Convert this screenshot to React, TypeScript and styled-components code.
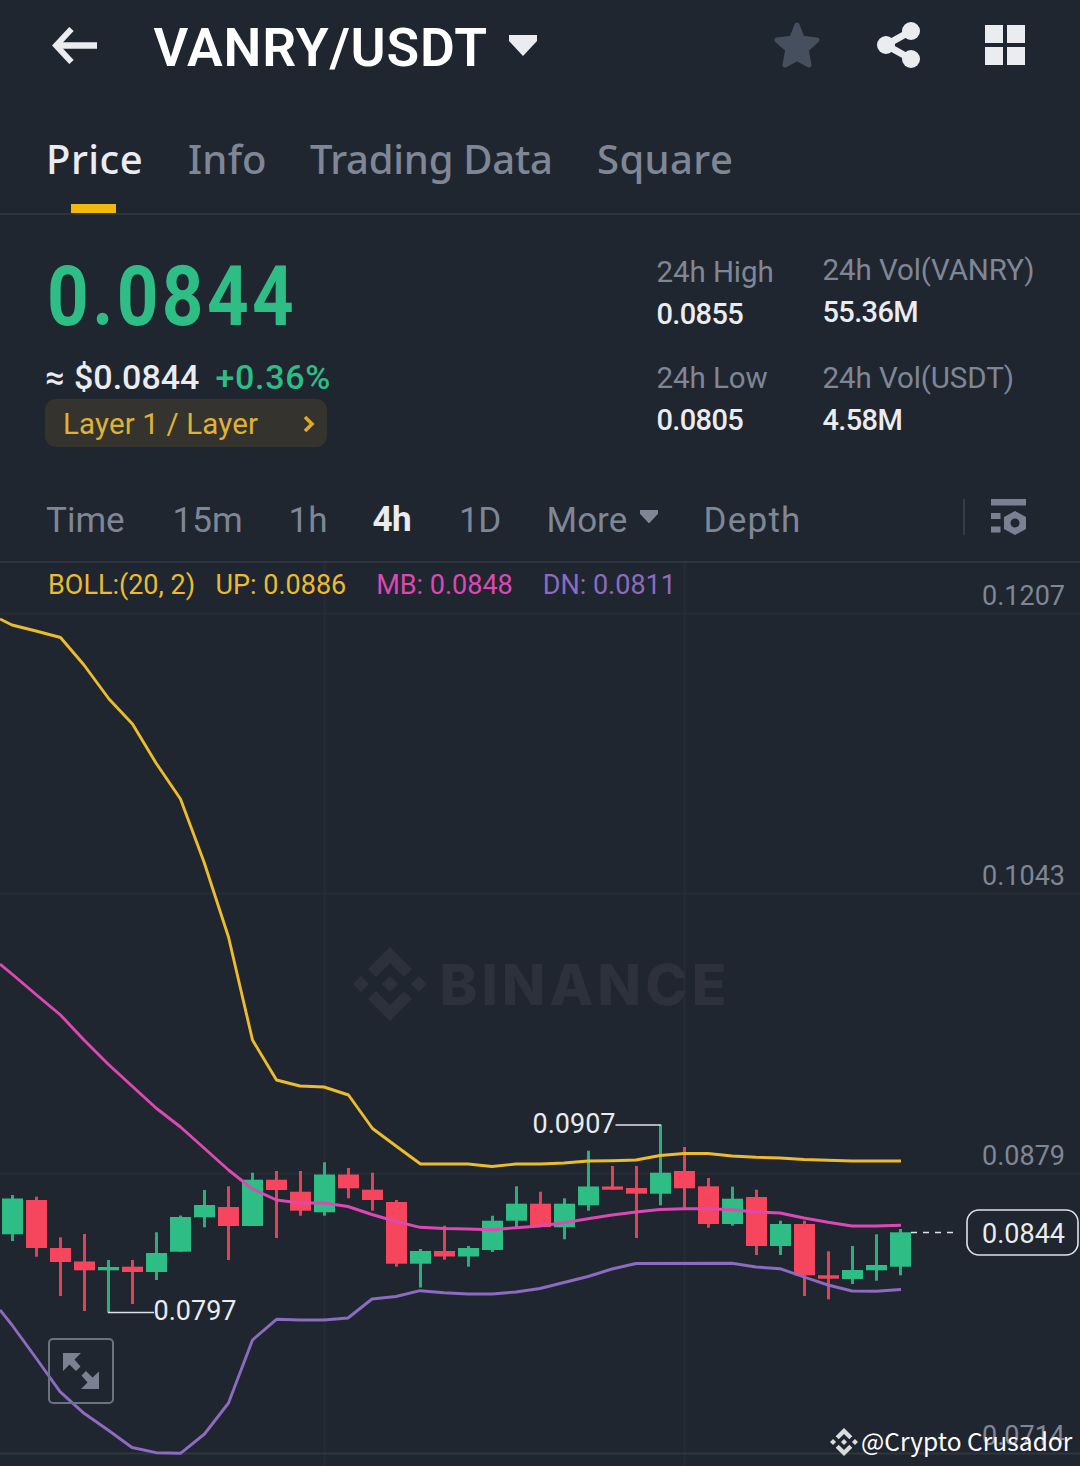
import React from 'react';
import styled, { createGlobalStyle } from 'styled-components';

const color = {
  bg: '#1f262f',
  line: '#2d343f',
  grid: '#262c36',
  text: '#eaecef',
  muted: '#7f8796',
  green: '#2ebd85',
  red: '#f6465d',
  yellow: '#ecbc2e',
  pink: '#de48b4',
  purple: '#8c6bc0',
  mark: '#2c313c',
};

const GlobalStyle = createGlobalStyle`
  body {
    margin: 0;
    background: ${color.bg};
    font-family: Roboto, 'Liberation Sans', sans-serif;
    color: ${color.text};
  }
`;

const Screen = styled.div`
  width: 1080px;
  height: 1466px;
  overflow: hidden;
  display: flex;
  flex-direction: column;
  background: ${color.bg};
`;

const Icon = styled.svg`
  display: block;
  flex: none;
`;

const Header = styled.header`
  display: flex;
  align-items: center;
  height: 90px;
  padding: 0 55px 0 52px;
  box-sizing: border-box;
`;

const Pair = styled.h1`
  margin: 0 21px 0 56.5px;
  padding-top: 5px;
  font-size: 53.5px;
  font-weight: 600;
  line-height: 60px;
  letter-spacing: 0.8px;
  color: #fff;
`;

const Actions = styled.div`
  display: flex;
  align-items: center;
  margin-left: auto;
  gap: 57px;
`;

const GridAction = styled.div`
  margin-left: 8px;
`;

const Tabs = styled.nav`
  display: flex;
  gap: 44px;
  height: 125px;
  padding-left: 46px;
  box-sizing: border-box;
  border-bottom: 2px solid ${color.line};
`;

const Tab = styled.div<{ $width: number; $spacing: number; $active?: boolean }>`
  position: relative;
  width: ${(p) => p.$width}px;
  padding-top: 44px;
  white-space: nowrap;
  font-family: 'Noto Sans', sans-serif;
  font-size: 40px;
  font-weight: 500;
  line-height: 50px;
  letter-spacing: ${(p) => p.$spacing}px;
  color: ${(p) => (p.$active ? color.text : color.muted)};
`;

const TabMarker = styled.span`
  position: absolute;
  left: 25px;
  bottom: 0;
  width: 45px;
  height: 9px;
  background: #f0b90b;
`;

const Summary = styled.section`
  display: flex;
  height: 262px;
  padding-left: 45px;
`;

const PriceColumn = styled.div`
  width: 611.5px;
  padding-top: 40px;
`;

const LastPrice = styled.div`
  width: 300px;
  margin-left: 2px;
  font-size: 84px;
  font-weight: 700;
  line-height: 84px;
  letter-spacing: 4px;
  transform: scaleX(0.865);
  transform-origin: left;
  color: ${color.green};
`;

const FiatRow = styled.div`
  display: flex;
  margin-top: 18px;
  font-size: 34px;
  font-weight: 500;
  line-height: 40px;
`;

const Approx = styled.span`
  width: 29px;
`;

const Change = styled.span`
  margin-left: 16px;
  letter-spacing: 0.7px;
  color: ${color.green};
`;

const Chip = styled.div`
  display: flex;
  align-items: center;
  justify-content: space-between;
  width: 282px;
  height: 48px;
  margin-top: 2px;
  padding: 2px 12px 0 18px;
  box-sizing: border-box;
  border-radius: 11px;
  background: #35332d;
  font-size: 29.5px;
  line-height: 40px;
  letter-spacing: 0.15px;
  color: #dfb237;
`;

const StatColumn = styled.div<{ $top: number; $width: number; $gap: number }>`
  display: flex;
  flex-direction: column;
  gap: ${(p) => p.$gap}px;
  width: ${(p) => p.$width}px;
  padding-top: ${(p) => p.$top}px;
  white-space: nowrap;
`;

const StatLabel = styled.div`
  font-size: 29.5px;
  line-height: 42px;
  letter-spacing: -0.08px;
  color: ${color.muted};
`;

const StatValue = styled.div`
  font-size: 29px;
  font-weight: 500;
  line-height: 42px;
  letter-spacing: -0.65px;
`;

const Intervals = styled.nav`
  display: flex;
  align-items: center;
  gap: 46px;
  height: 86px;
  padding: 3px 54px 0 46px;
  box-sizing: border-box;
  border-bottom: 2px solid ${color.line};
  font-size: 35px;
  line-height: 40px;
  color: ${color.muted};
`;

const Interval = styled.div<{ $width: number; $active?: boolean; $spacing?: number }>`
  display: flex;
  align-items: center;
  gap: 13px;
  width: ${(p) => p.$width}px;
  padding-bottom: ${(p) => (p.$active ? 2 : 0)}px;
  white-space: nowrap;
  font-weight: ${(p) => (p.$active ? 700 : 400)};
  letter-spacing: ${(p) => p.$spacing ?? 0}px;
  color: ${(p) => (p.$active ? color.text : color.muted)};
`;

const MenuMark = styled.span`
  padding-bottom: 8px;
`;

const ChartTools = styled.div`
  display: flex;
  align-items: center;
  gap: 26px;
  margin-left: auto;
  padding-bottom: 7px;
`;

const ToolDivider = styled.span`
  width: 2px;
  height: 36px;
  background: #343b47;
`;

const ChartArea = styled.main`
  position: relative;
  height: 903px;
`;

const Legend = styled.div`
  position: absolute;
  top: 4px;
  left: 48px;
  display: flex;
  gap: 30px;
  white-space: nowrap;
  font-size: 27px;
  line-height: 36px;
  letter-spacing: -0.01px;
`;

const LegendItem = styled.span<{ $color: string }>`
  color: ${(p) => p.$color};
`;

const LegendName = styled.span`
  margin-right: 20.5px;
`;

const ExpandButton = styled.div`
  position: absolute;
  left: 48px;
  top: 775px;
  display: grid;
  place-items: center;
  width: 66px;
  height: 66px;
  box-sizing: border-box;
  border: 2px solid #6b7280;
  border-radius: 5px;
`;

const Credit = styled.div`
  position: absolute;
  left: 830px;
  top: 859px;
  display: flex;
  align-items: center;
  gap: 3px;
  height: 40px;
  white-space: nowrap;
  font-family: 'Noto Sans CJK SC', sans-serif;
  font-size: 24.5px;
  line-height: 38px;
  letter-spacing: 0.05px;
  color: #fff;
`;

const CreditName = styled.span`
  padding-bottom: 2px;
`;

const ChartSvg = styled.svg`
  display: block;
  font-family: Roboto, 'Liberation Sans', sans-serif;
  font-size: 27px;
`;

type Candle = [up: 0 | 1, bodyTop: number, bodyBottom: number, high: number, low: number];

const candles: Candle[] = [
  [1, 1198.5, 1234.3, 1195, 1241],
  [0, 1200, 1248, 1196.7, 1256.7],
  [0, 1248, 1262, 1237.3, 1296],
  [0, 1261.5, 1270.3, 1234, 1311],
  [1, 1267, 1270.3, 1260, 1312.7],
  [0, 1266.7, 1272, 1260, 1304],
  [1, 1253, 1272, 1232.3, 1280],
  [1, 1217, 1251.7, 1215.5, 1251.7],
  [1, 1205, 1217.3, 1190, 1227.3],
  [0, 1207, 1226, 1186.3, 1260],
  [1, 1179.7, 1226, 1172.7, 1226],
  [0, 1179.7, 1190, 1171, 1238],
  [0, 1191.7, 1210.7, 1171, 1215.7],
  [1, 1174.5, 1212.3, 1162.3, 1215.7],
  [0, 1174.5, 1188.3, 1168, 1198.3],
  [0, 1189.7, 1200, 1172.7, 1210.7],
  [0, 1202, 1263.7, 1200, 1266.7],
  [1, 1251, 1263.7, 1249, 1287.5],
  [0, 1251, 1256.5, 1225.7, 1259.7],
  [1, 1248, 1256.5, 1246, 1266.7],
  [1, 1220.7, 1250, 1215.7, 1252],
  [1, 1203.7, 1220.7, 1186.3, 1227.3],
  [0, 1203.7, 1227, 1191.7, 1227],
  [1, 1203.7, 1227.3, 1198.3, 1239.3],
  [1, 1186.5, 1205.3, 1150.7, 1210.7],
  [0, 1186.5, 1189.7, 1166, 1189.7],
  [0, 1188, 1193.7, 1166, 1238],
  [1, 1172.7, 1193.7, 1124.7, 1205.3],
  [0, 1171, 1188.3, 1147, 1208],
  [0, 1186.3, 1224, 1178, 1227.7],
  [1, 1198.7, 1224, 1186.7, 1225.7],
  [0, 1197, 1246, 1189.7, 1255],
  [1, 1224, 1246, 1220.7, 1255],
  [0, 1224, 1275.3, 1220.7, 1296],
  [0, 1275.3, 1278.7, 1251.3, 1299.3],
  [1, 1270, 1279, 1246, 1284],
  [1, 1265, 1270.3, 1234.3, 1280.7],
  [1, 1232.3, 1266.7, 1229, 1275.3],
];

const upperBand =
  '0,619 12,625 36,631 60.5,637.5 84,665 109,699 132.5,724 156,763 180.5,799 204,862 228.5,937 252.5,1040 276.5,1080 300,1086 324,1087 348.5,1095 372.5,1128.5 396,1146 420.5,1164 468,1164 492,1166.5 516,1164 540,1164 564,1163 588,1161 612,1160.7 636,1160 660,1155.5 684,1153.5 708,1153.5 732,1156 756,1157.3 780,1158 804,1159.5 828,1160.3 852,1161 901,1161';
const middleBand =
  '0,964 12,974 36,994.5 60.5,1015 84,1040 108,1064 132,1086 156,1108 180.5,1127 204,1148 228.5,1170 252.5,1189 276.5,1200 300,1203 324,1203 348,1206.5 372,1214.5 396,1221.5 420,1227.3 444,1228.5 468,1229 492,1229.8 516,1227.7 540,1226 564,1222.7 588,1218.7 612,1215 636,1212 660,1209.5 684,1208.7 708,1208.7 732,1209.7 756,1212 780,1213 804,1218 828,1222.3 852,1226 876,1226 901,1225.3';
const lowerBand =
  '0,1310 12,1325 36,1358 60,1391.7 84,1413.3 108,1430 132,1447.5 156,1452.7 180.5,1453.3 204.5,1434 228.5,1403 252.5,1340 276.5,1319.3 300,1320 324,1320 348,1318 372,1299 396,1296.5 420,1290.7 444,1292.7 468,1294 492,1294 516,1292 540,1288.5 564,1282.5 588,1276.5 612,1269 636,1263.5 732,1263.3 756,1267 780,1268.7 804,1277 828,1285 852,1291 876,1291.3 901,1289.5';

const axisLabels: [string, number][] = [
  ['0.1207', 604.7],
  ['0.1043', 884.7],
  ['0.0879', 1164.7],
  ['0.0714', 1444.7],
];

/* The exchange emblem on a 74-unit square. */
const emblem =
  'M37 0 59 22 51 30 37 16 23 30 15 22ZM8 29 16 37 8 45 0 37ZM66 29 74 37 66 45 58 37ZM37 29 45 37 37 45 29 37ZM37 74 15 52 23 44 37 58 51 44 59 52Z';

const DownMark = ({ width, height, fill }: { width: number; height: number; fill: string }) => (
  <Icon width={width} height={height} viewBox="0 0 28 21" fill={fill}>
    <path d="M0 0H28V6L14 21 0 6Z" />
  </Icon>
);

const Chart = () => (
  <ChartSvg width={1080} height={903} viewBox="0 563 1080 903">
    <g fill={color.grid}>
      <rect x={323.5} y={563} width={2} height={903} />
      <rect x={683.5} y={563} width={2} height={903} />
      <rect x={0} y={612.5} width={1080} height={2} />
      <rect x={0} y={892.5} width={1080} height={2} />
      <rect x={0} y={1172.5} width={1080} height={2} />
      <rect x={0} y={1452.5} width={1080} height={2} fill="#30363f" />
    </g>
    <g fill={color.mark}>
      <path d={emblem} transform="translate(353 947)" />
      <text x={439.5} y={1004.5} fontFamily="Inter, sans-serif" fontSize={57} fontWeight={800} textLength={287}>
        BINANCE
      </text>
    </g>
    {candles.map(([up, top, bottom, high, low], i) => (
      <g key={i} fill={up ? color.green : color.red}>
        <rect x={2 + i * 24} y={top} width={21} height={bottom - top} />
        <rect x={11 + i * 24} y={high} width={3} height={low - high} opacity={0.9} />
      </g>
    ))}
    <g fill="none" strokeWidth={2.9} strokeLinejoin="round">
      <polyline points={upperBand} stroke={color.yellow} />
      <polyline points={middleBand} stroke={color.pink} />
      <polyline points={lowerBand} stroke={color.purple} />
    </g>
    <g stroke="#dfe2e8" strokeWidth={1.6} fill="none">
      <path d="M108 1312.5H154M615.5 1125H661" />
      <path d="M911 1232.5H953" strokeDasharray="6 6" />
      <rect x={967} y={1210} width={111} height={45} rx={12} />
    </g>
    <g fill={color.text}>
      <text x={153.5} y={1319.7}>0.0797</text>
      <text x={532.5} y={1132.7}>0.0907</text>
      <text x={982} y={1242.8}>0.0844</text>
    </g>
    <g fill={color.muted}>
      {axisLabels.map(([label, y]) => (
        <text key={label} x={982} y={y}>
          {label}
        </text>
      ))}
    </g>
  </ChartSvg>
);

export default function App() {
  return (
    <Screen>
      <GlobalStyle />
      <Header>
        <Icon width={45} height={37} viewBox="0 0 45 37" fill="none" stroke={color.text}>
          <path d="M4 18.5H45" strokeWidth={6.4} />
          <path d="M19.5 2 4 18.5 19.5 35" strokeWidth={6} />
        </Icon>
        <Pair>VANRY/USDT</Pair>
        <DownMark width={28} height={21} fill={color.text} />
        <Actions>
          <Icon width={46} height={46} viewBox="0 0 46 46" fill="#464f5e" stroke="#464f5e" strokeWidth={5} strokeLinejoin="round">
            <path d="M23 3 28.2 16.2 43 18 32.2 27.5 35 43 23 36.5 11 43 13.8 27.5 3 18 17.8 16.2Z" />
          </Icon>
          <Icon width={43} height={46} viewBox="0 0 43 46" fill={color.text} stroke={color.text}>
            <path d="M34 9 9 23 34 37" fill="none" strokeWidth={7} />
            <circle cx={34} cy={9} r={9} stroke="none" />
            <circle cx={9} cy={23} r={9} stroke="none" />
            <circle cx={34} cy={37} r={9} stroke="none" />
          </Icon>
          <GridAction>
            <Icon width={40} height={40} viewBox="0 0 40 40" fill={color.text}>
              <path d="M0 0H18V18H0ZM22 0H40V18H22ZM0 22H18V40H0ZM22 22H40V40H22Z" />
            </Icon>
          </GridAction>
        </Actions>
      </Header>

      <Tabs>
        <Tab $width={98} $spacing={0.5} $active>
          Price
          <TabMarker />
        </Tab>
        <Tab $width={78} $spacing={0.2}>Info</Tab>
        <Tab $width={243} $spacing={-0.25}>Trading Data</Tab>
        <Tab $width={136} $spacing={0.4}>Square</Tab>
      </Tabs>

      <Summary>
        <PriceColumn>
          <LastPrice>0.0844</LastPrice>
          <FiatRow>
            <Approx>≈</Approx>
            <span>$0.0844</span>
            <Change>+0.36%</Change>
          </FiatRow>
          <Chip>
            Layer 1 / Layer
            <Icon width={12} height={18} viewBox="0 0 12 18" fill="none" stroke="#dda92b" strokeWidth={3.6}>
              <path d="M2 2 9 9 2 16" />
            </Icon>
          </Chip>
        </PriceColumn>
        <StatColumn $top={36} $width={166} $gap={22}>
          <div>
            <StatLabel>24h High</StatLabel>
            <StatValue>0.0855</StatValue>
          </div>
          <div>
            <StatLabel>24h Low</StatLabel>
            <StatValue>0.0805</StatValue>
          </div>
        </StatColumn>
        <StatColumn $top={34} $width={214} $gap={24}>
          <div>
            <StatLabel>24h Vol(VANRY)</StatLabel>
            <StatValue>55.36M</StatValue>
          </div>
          <div>
            <StatLabel>24h Vol(USDT)</StatLabel>
            <StatValue>4.58M</StatValue>
          </div>
        </StatColumn>
      </Summary>

      <Intervals>
        <Interval $width={80.6}>Time</Interval>
        <Interval $width={70}>15m</Interval>
        <Interval $width={38}>1h</Interval>
        <Interval $width={40.5} $active $spacing={-0.6}>4h</Interval>
        <Interval $width={41.5} $spacing={-0.4}>1D</Interval>
        <Interval $width={111}>
          More
          <MenuMark>
            <DownMark width={18} height={13.5} fill={color.muted} />
          </MenuMark>
        </Interval>
        <Interval $width={98} $spacing={1.2}>Depth</Interval>
        <ChartTools>
          <ToolDivider />
          <Icon width={35} height={36} viewBox="0 0 35 36" fill="#7a8192">
            <path d="M0 0H35V6.5H0ZM0 14H9.5V20H0ZM0 27.5H9.5V33.5H0Z" />
            <path fillRule="evenodd" d="M24 12 35 18V30L24 36 13 30V18ZM24 19.5A4.5 4.5 0 1 0 24 28.5 4.5 4.5 0 1 0 24 19.5Z" />
          </Icon>
        </ChartTools>
      </Intervals>

      <ChartArea>
        <Chart />
        <Legend>
          <LegendItem $color={color.yellow}>
            <LegendName>BOLL:(20, 2)</LegendName>
            UP: 0.0886
          </LegendItem>
          <LegendItem $color={color.pink}>MB: 0.0848</LegendItem>
          <LegendItem $color={color.purple}>DN: 0.0811</LegendItem>
        </Legend>
        <ExpandButton>
          <Icon width={36} height={36} viewBox="0 0 36 36" fill="#7a8192">
            <path d="M0 0H18L11.5 6.5 17.5 13.5 13 18 6.5 11.5 0 18ZM36 36H18L24.5 29.5 18.5 22.5 23 18 29.5 24.5 36 18.5Z" />
          </Icon>
        </ExpandButton>
        <Credit>
          <Icon width={28} height={28} viewBox="0 0 74 74" fill="#d9dbde">
            <path d={emblem} />
          </Icon>
          <CreditName>@Crypto Crusador</CreditName>
        </Credit>
      </ChartArea>
    </Screen>
  );
}
